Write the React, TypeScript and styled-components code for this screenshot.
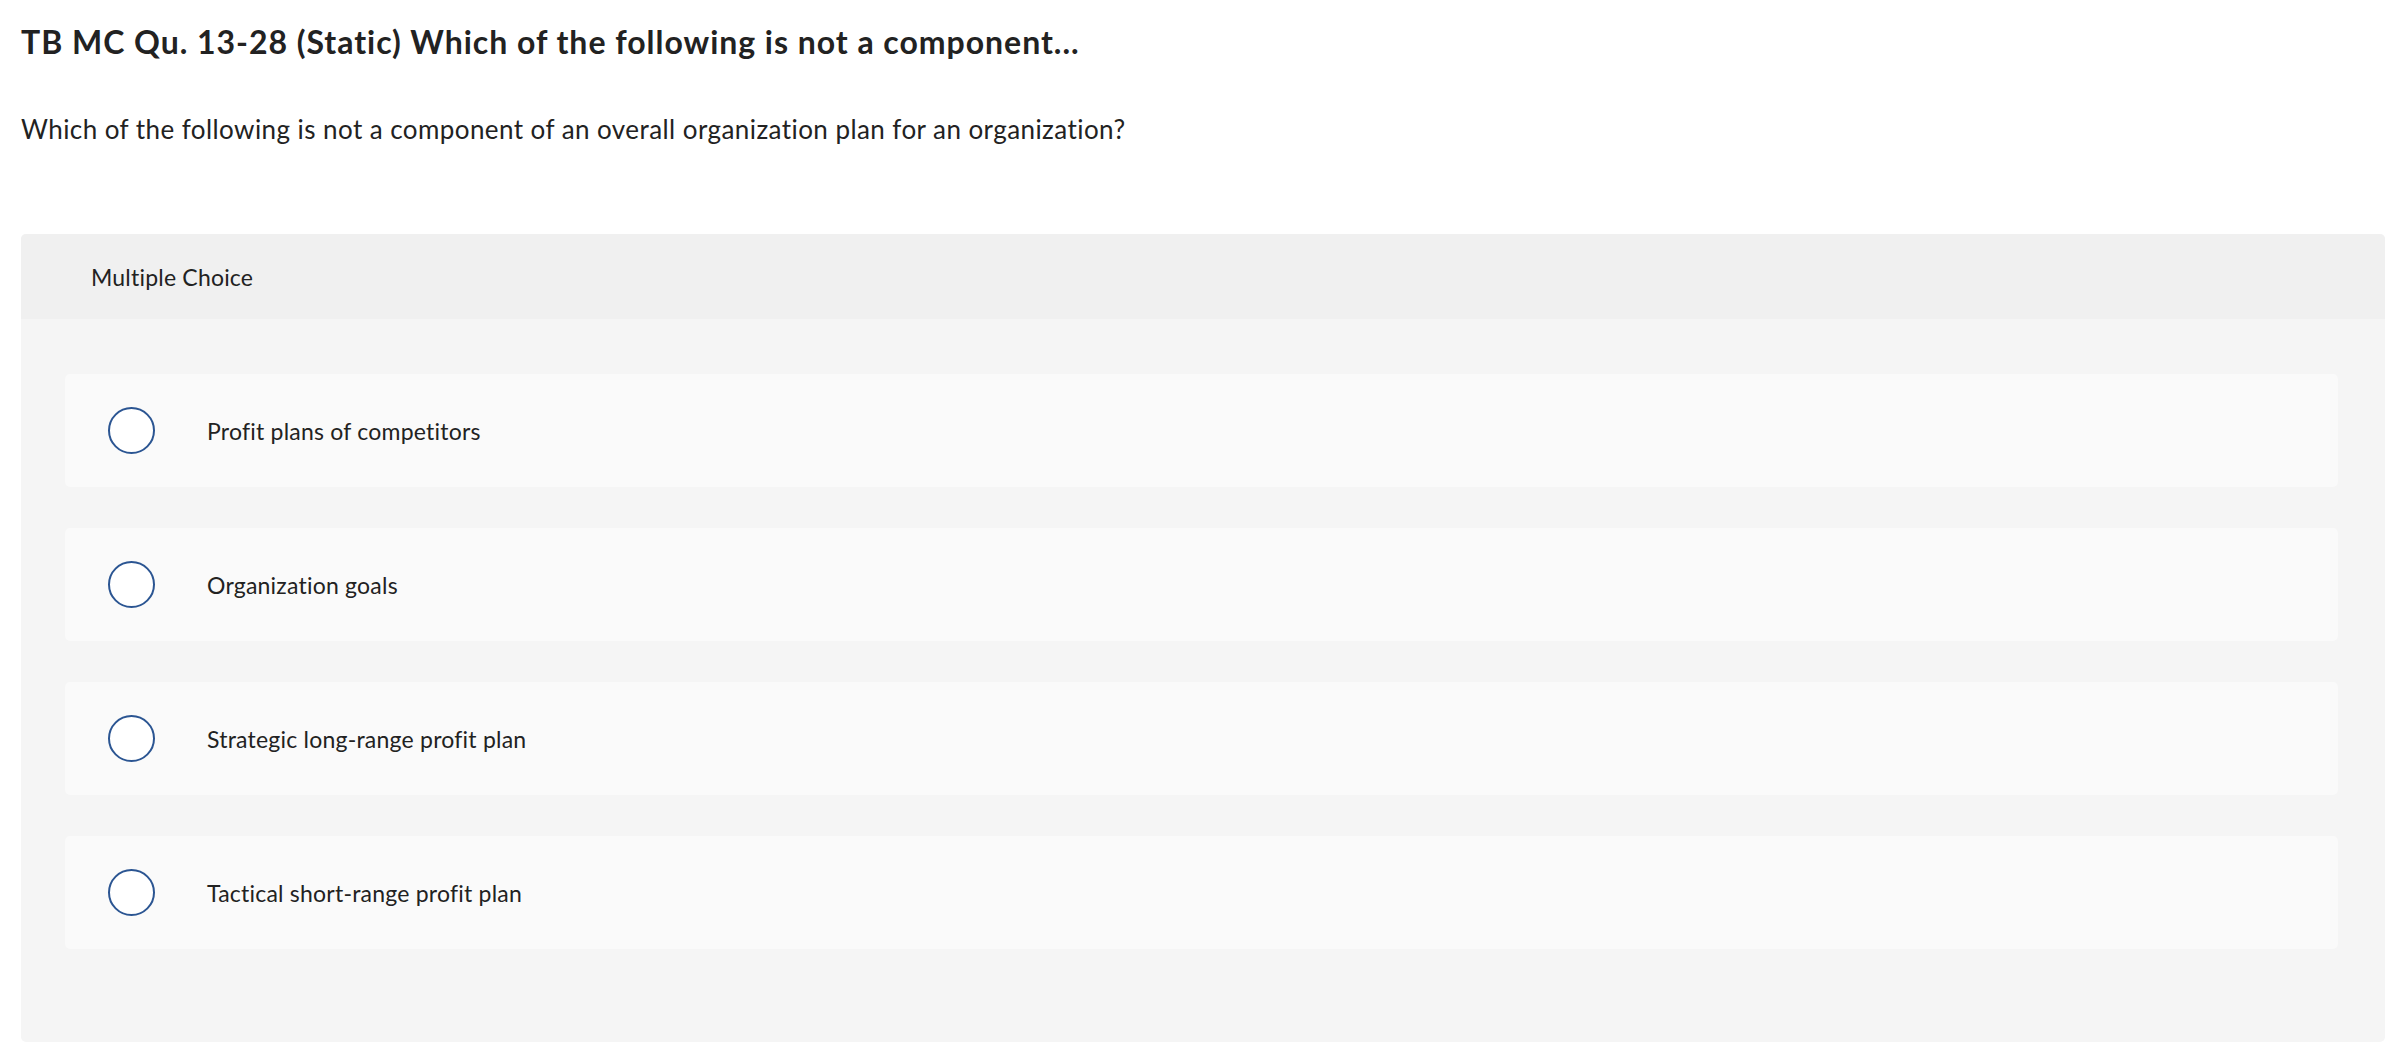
import React from "react";
import styled, { createGlobalStyle } from "styled-components";

const GlobalStyle = createGlobalStyle`
  html, body {
    margin: 0;
    padding: 0;
    background: #ffffff;
  }
  body {
    font-family: Lato, "Open Sans", "Liberation Sans", sans-serif;
    font-variant-ligatures: none;
    color: #222222;
  }
`;

const Page = styled.div`
  padding: 23px 3px 4px 21px;
`;

const Title = styled.h1`
  margin: 0;
  font-size: 32px;
  line-height: 38px;
  font-weight: 700;
  letter-spacing: 0.97px;
  color: #222222;
`;

const Prompt = styled.p`
  margin: 50px 0 0;
  font-size: 26px;
  line-height: 36px;
  font-weight: 400;
  letter-spacing: 0.43px;
  color: #222222;
`;

const Panel = styled.section`
  margin-top: 87px;
  background: #f5f5f5;
  border-radius: 5px;
  overflow: hidden;
`;

const PanelHeader = styled.div`
  height: 85px;
  display: flex;
  align-items: center;
  padding-left: 70px;
  background: #f0f0f0;
  font-size: 23px;
  letter-spacing: 0.2px;
`;

const OptionList = styled.div`
  display: flex;
  flex-direction: column;
  gap: 41px;
  padding: 55px 47px 93px 44px;
`;

const Option = styled.label`
  height: 113px;
  display: flex;
  align-items: center;
  gap: 52px;
  padding-left: 43px;
  background: #fafafa;
  border-radius: 5px;
  font-size: 23px;
  letter-spacing: 0.22px;
  cursor: pointer;
`;

const Radio = styled.span`
  width: 47px;
  height: 47px;
  box-sizing: border-box;
  border: 2px solid #2b5592;
  border-radius: 50%;
  background: #ffffff;
  flex-shrink: 0;
`;

const choices = [
  "Profit plans of competitors",
  "Organization goals",
  "Strategic long-range profit plan",
  "Tactical short-range profit plan",
];

export default function App() {
  return (
    <>
      <GlobalStyle />
      <Page>
        <Title>
          TB MC Qu. 13-28 (Static) Which of the following is not a component...
        </Title>
        <Prompt>
          Which of the following is not a component of an overall organization
          plan for an organization?
        </Prompt>
        <Panel>
          <PanelHeader>Multiple Choice</PanelHeader>
          <OptionList>
            {choices.map((c) => (
              <Option key={c}>
                <Radio />
                {c}
              </Option>
            ))}
          </OptionList>
        </Panel>
      </Page>
    </>
  );
}
